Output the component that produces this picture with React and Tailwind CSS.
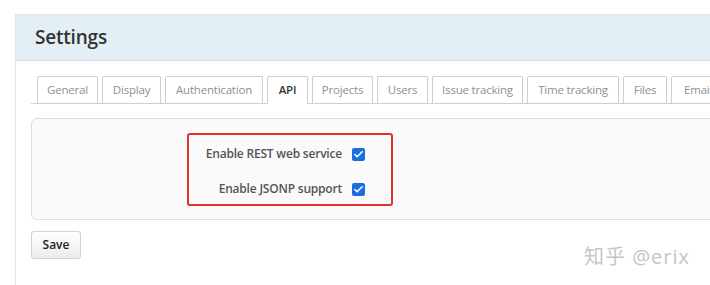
import { Check } from 'lucide-react';

const tabs = [
    { label: 'General', w: 'w-[61px]' },
    { label: 'Display', w: 'w-[59px]' },
    { label: 'Authentication', w: 'w-[98px]' },
    { label: 'API', w: 'w-[41px]', active: true },
    { label: 'Projects', w: 'w-[61px]' },
    { label: 'Users', w: 'w-[51px]' },
    { label: 'Issue tracking', w: 'w-[91px]' },
    { label: 'Time tracking', w: 'w-[92px]' },
    { label: 'Files', w: 'w-[44px]' },
    { label: 'Email notifications', w: 'w-[130px] justify-start pl-[12px]' },
];

const CheckBox = () => (
    <span className="flex h-[13px] w-[13px] items-center justify-center rounded-[2px] bg-[#1a6fe0]">
        <Check size={11} strokeWidth={3.5} className="text-white" />
    </span>
);

const App = () => {
    return (
        <div
            className="relative h-[285px] w-[710px] overflow-hidden bg-white pl-[15px] pt-[14px] text-[#333]"
            style={{ fontFamily: '"Open Sans", "Noto Sans CJK SC", sans-serif' }}
        >
            <div className="h-[300px] w-[760px] border border-[#dfe4e7] bg-white">
                {/* header */}
                <div className="flex h-[46px] items-center border-b border-[#d5dde2] bg-[#e4eff5] px-[19px]">
                    <h2 className="text-[19px] font-semibold tracking-[-0.2px] text-[#333]">Settings</h2>
                </div>

                <div className="pl-[15px] pt-[15px]">
                    {/* tabs */}
                    <ul className="flex gap-[4px] border-b border-[#cfcfcf] pl-[6px]">
                        {tabs.map(t => (
                            <li
                                key={t.label}
                                className={`flex shrink-0 items-center justify-center whitespace-nowrap rounded-t-[2px] border border-b-0 border-[#cfcfcf] bg-white text-[11.5px] tracking-[-0.2px] ${t.w} ${
                                    t.active
                                        ? 'relative -mb-px h-[28px] pb-px font-semibold text-[#333]'
                                        : 'h-[27px] font-medium text-[#8f8f8f]'
                                }`}
                            >
                                {t.label}
                            </li>
                        ))}
                    </ul>

                    {/* settings box */}
                    <div className="mt-[14px] h-[102px] rounded-[6px] border border-[#dedede] bg-[#fafafa] pl-[155px] pt-[14px]">
                        <div className="h-[73px] w-[206px] rounded-[3px] border-2 border-[#e3302b] pt-[7px]">
                            <div className="grid grid-cols-[153px_13px] items-center gap-x-[10px] gap-y-[11px]">
                                <label className="flex h-[24px] items-center justify-end text-[12px] font-semibold tracking-[-0.2px] text-[#555]">
                                    Enable REST web service
                                </label>
                                <CheckBox />
                                <label className="flex h-[24px] items-center justify-end text-[12px] font-semibold tracking-[-0.2px] text-[#555]">
                                    Enable JSONP support
                                </label>
                                <CheckBox />
                            </div>
                        </div>
                    </div>

                    <button className="mt-[11px] h-[28px] w-[50px] rounded-[3px] border border-[#d2d2d2] bg-gradient-to-b from-white to-[#ececec] text-[12px] font-semibold text-[#222]">
                        Save
                    </button>
                </div>
            </div>

            {/* watermark */}
            <div className="absolute left-[584px] top-[242px] text-[20px] tracking-[1px] text-[#c6c6c6]">
                知乎 @erix
            </div>
        </div>
    );
};

export default App;
